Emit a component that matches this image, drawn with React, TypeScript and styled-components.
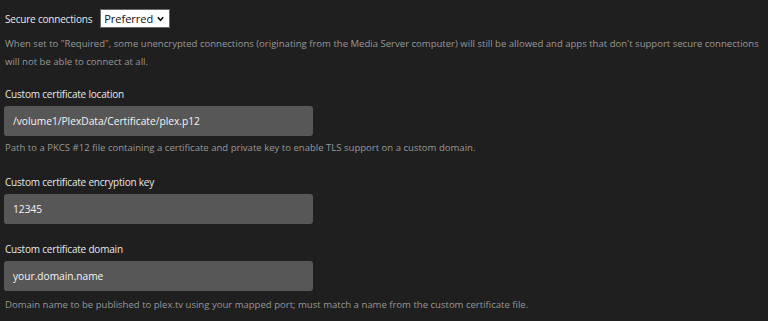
import styled, { createGlobalStyle } from "styled-components";

const Global = createGlobalStyle`
  html, body {
    margin: 0;
    padding: 0;
    background: #1f1f1f;
  }
  body {
    font-family: "Open Sans", "Noto Sans", sans-serif;
  }
`;

const Page = styled.div`
  width: 768px;
  height: 321px;
  box-sizing: border-box;
  padding: 9px 5px 0 5px;
  background: #1f1f1f;
  overflow: hidden;
`;

const InlineRow = styled.div`
  display: flex;
  align-items: center;
  gap: 8px;
  height: 19px;
`;

const Label = styled.div<{ $top?: number }>`
  color: #e8e8e8;
  font-size: 10px;
  letter-spacing: -0.2px;
  line-height: 14px;
  margin-top: ${(p) => p.$top ?? 0}px;
`;

const SelectWrap = styled.div`
  position: relative;
  display: inline-flex;
`;

const Select = styled.select`
  appearance: none;
  -webkit-appearance: none;
  box-sizing: border-box;
  font-family: "Open Sans", sans-serif;
  font-size: 11px;
  width: 70px;
  height: 19px;
  line-height: 17px;
  padding: 0 14px 0 3px;
  background: #ffffff;
  color: #111;
  border: 1px solid #6a6a6a;
  border-radius: 0;
  outline: none;
`;

const Chevron = styled.svg`
  position: absolute;
  right: 6px;
  top: 7px;
  width: 7px;
  height: 6px;
  pointer-events: none;
`;

const Help = styled.p<{ $top?: number }>`
  margin: ${(p) => p.$top ?? 0}px 0 0 0;
  color: #979797;
  font-size: 9.55px;
  line-height: 18px;
`;

const Input = styled.input`
  display: block;
  box-sizing: border-box;
  width: 309px;
  height: 30px;
  margin: 5px 0 0 -1px;
  padding: 0 9px;
  background: #575757;
  color: #f4f4f4;
  border: none;
  border-radius: 3px;
  font-family: "Open Sans", sans-serif;
  font-size: 10.2px;
  font-weight: 500;
  outline: none;
`;

export default function App() {
  return (
    <Page>
      <Global />
      <InlineRow>
        <Label>Secure connections</Label>
        <SelectWrap>
          <Select defaultValue="Preferred">
            <option>Disabled</option>
            <option>Preferred</option>
            <option>Required</option>
          </Select>
          <Chevron viewBox="0 0 7 6">
            <path d="M0.8 1.2 L3.5 4.2 L6.2 1.2" fill="none" stroke="#111" strokeWidth="1.6" />
          </Chevron>
        </SelectWrap>
      </InlineRow>
      <Help $top={7}>
        When set to "Required", some unencrypted connections (originating from the Media Server
        computer) will still be allowed and apps that don't support secure connections will not be
        able to connect at all.
      </Help>

      <Label $top={16}>Custom certificate location</Label>
      <Input defaultValue="/volume1/PlexData/Certificate/plex.p12" />
      <Help $top={3}>
        Path to a PKCS #12 file containing a certificate and private key to enable TLS support on a
        custom domain.
      </Help>

      <Label $top={18}>Custom certificate encryption key</Label>
      <Input defaultValue="12345" />

      <Label $top={18}>Custom certificate domain</Label>
      <Input defaultValue="your.domain.name" />
      <Help $top={5}>
        Domain name to be published to plex.tv using your mapped port; must match a name from the
        custom certificate file.
      </Help>
    </Page>
  );
}
